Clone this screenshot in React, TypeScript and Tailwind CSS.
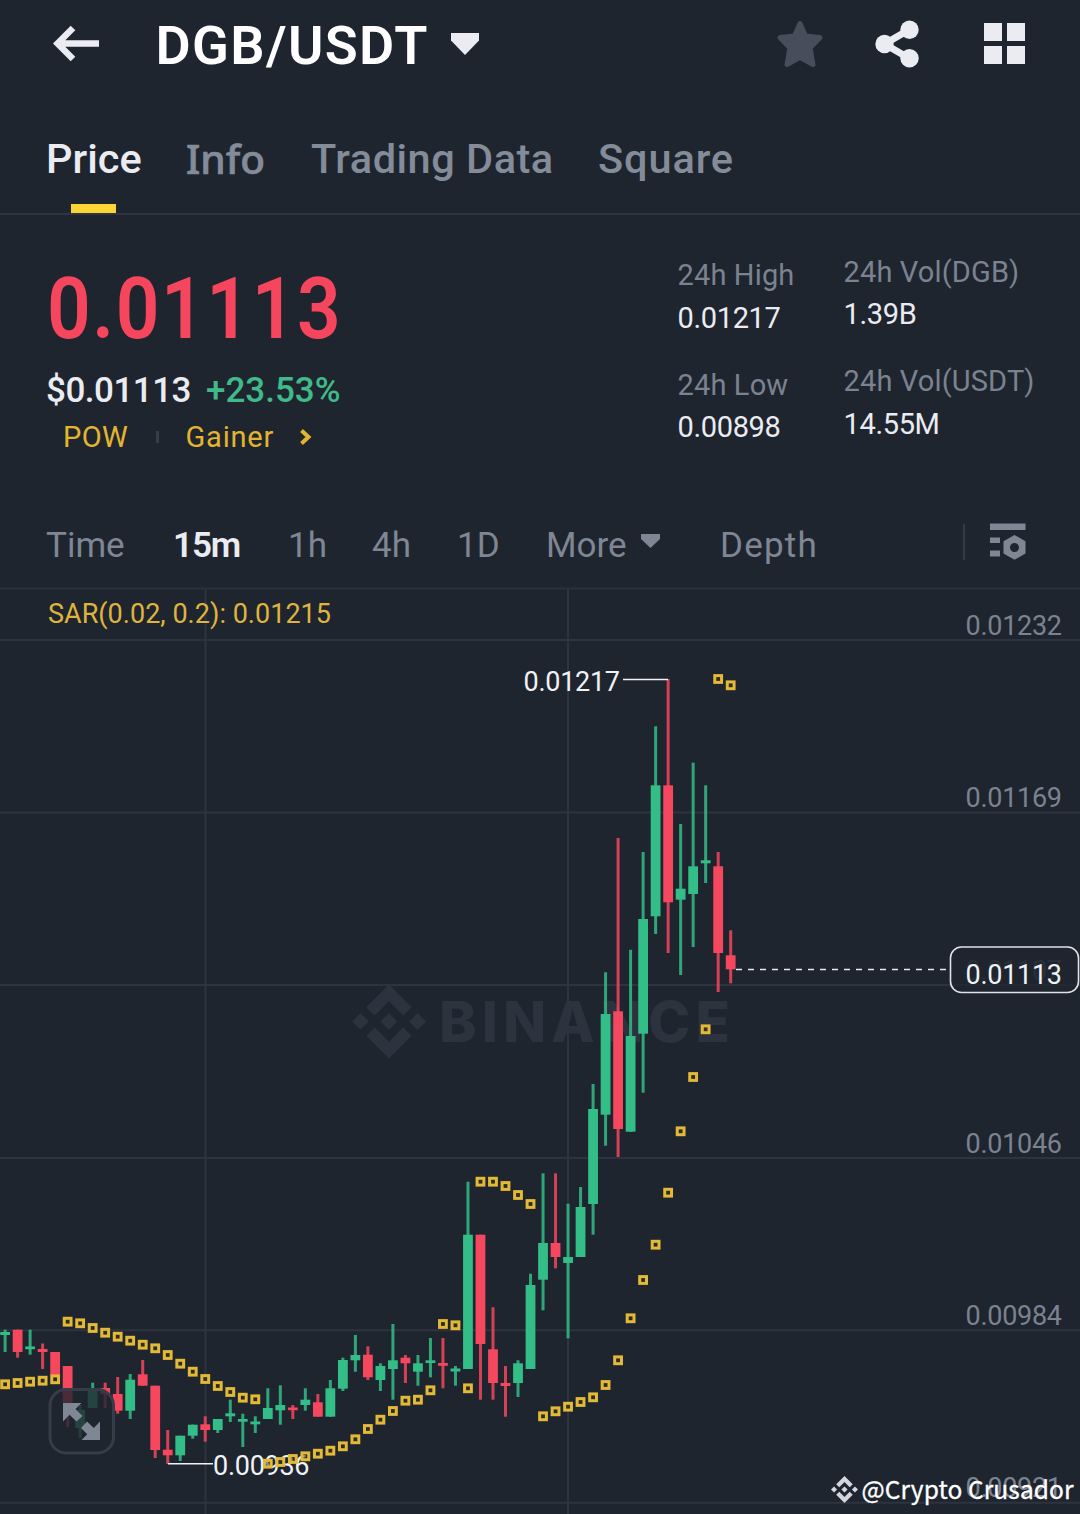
import { SiBinance } from 'react-icons/si';

type Candle = [color: 'g' | 'r', high: number, low: number, top: number, bottom: number];

const UP = '#33bd87';
const DOWN = '#f5475e';
const SAR = '#e3b938';

const candles: Candle[] = [
  ['g', 1329.7, 1352, 1332, 1335],
  ['r', 1329.7, 1357.7, 1329.7, 1352],
  ['g', 1329.7, 1354.7, 1346.5, 1349.2],
  ['r', 1343.5, 1369, 1349, 1352],
  ['r', 1352, 1375, 1352, 1375],
  ['r', 1366, 1427, 1366, 1402.7],
  ['g', 1405, 1438, 1410, 1428],
  ['g', 1382.7, 1408, 1389, 1408],
  ['r', 1382.7, 1408, 1388, 1394],
  ['r', 1377, 1413.7, 1394, 1410.7],
  ['g', 1374, 1419, 1379.7, 1410.7],
  ['r', 1360, 1385.7, 1374.3, 1385.7],
  ['r', 1385.7, 1458, 1385.7, 1450],
  ['r', 1430, 1464, 1449.7, 1455.3],
  ['g', 1435.7, 1461, 1435.7, 1455.3],
  ['g', 1424.7, 1438.7, 1424.7, 1435.7],
  ['r', 1416.3, 1441.7, 1424.3, 1430],
  ['g', 1419, 1433, 1419, 1430],
  ['g', 1399.7, 1422, 1413.3, 1416.3],
  ['g', 1413.7, 1447, 1419, 1421.7],
  ['g', 1416.3, 1433, 1421.5, 1424.3],
  ['g', 1388.3, 1419, 1408, 1419],
  ['g', 1385.3, 1424.7, 1405, 1410.3],
  ['r', 1405, 1419, 1407.5, 1410.2],
  ['g', 1388.3, 1410.7, 1399.7, 1405],
  ['r', 1394, 1416.7, 1402.3, 1416.7],
  ['g', 1380, 1416.7, 1388.3, 1416.7],
  ['g', 1357.7, 1391, 1360, 1388.7],
  ['g', 1335, 1371.7, 1355, 1360.3],
  ['r', 1346.3, 1380, 1354.7, 1377.3],
  ['g', 1363.3, 1391, 1366, 1380],
  ['g', 1324, 1399.7, 1360.3, 1369],
  ['r', 1355, 1383, 1357.7, 1363.3],
  ['g', 1355, 1385.7, 1363.3, 1371.7],
  ['g', 1338, 1377.3, 1360.3, 1363],
  ['r', 1338, 1388.3, 1363, 1365.8],
  ['g', 1366, 1385.7, 1368.5, 1371.5],
  ['g', 1181.7, 1369, 1234.7, 1369],
  ['r', 1234.7, 1399.7, 1234.7, 1344],
  ['r', 1307.3, 1399.7, 1349.3, 1383],
  ['r', 1366, 1416.7, 1383, 1386],
  ['g', 1360.3, 1397, 1363.3, 1383],
  ['g', 1273.7, 1369, 1285, 1369],
  ['g', 1173.3, 1310.3, 1243, 1279.7],
  ['r', 1173.3, 1268.3, 1243, 1257],
  ['g', 1203.7, 1338.3, 1257, 1263],
  ['g', 1187, 1257, 1207, 1257],
  ['g', 1084, 1234.7, 1109, 1204],
  ['g', 972.3, 1145.7, 1014, 1114.7],
  ['r', 838, 1157, 1011.3, 1129],
  ['g', 949.7, 1131.7, 1036, 1131.7],
  ['g', 852, 1092.7, 919, 1033.7],
  ['g', 726.3, 934, 785.3, 916.3],
  ['r', 679, 953, 785.3, 902.3],
  ['g', 824, 975, 888.7, 899.7],
  ['g', 762.7, 947, 866.3, 894],
  ['g', 785.3, 883, 860.3, 863.3],
  ['r', 852, 992, 866.3, 953],
  ['r', 930.3, 983.3, 955.3, 969.3],
];

const sar = [
  1384.3, 1383, 1381.7, 1380.7, 1379.3, 1321.7, 1323.3, 1328, 1332.7, 1336.7, 1340.7, 1344.7,
  1348.3, 1355, 1363.7, 1371.7, 1379, 1386, 1392, 1397.7, 1399.3, 1463.7, 1462, 1459, 1456.3,
  1453.7, 1450.7, 1446.3, 1439.3, 1429, 1419.7, 1411, 1400.7, 1399.7, 1390.3, 1324, 1325.3,
  1388.3, 1181.7, 1181.7, 1186, 1195, 1204, 1416.3, 1411.3, 1406.7, 1402, 1397.3, 1385, 1360.3,
  1318.3, 1280, 1244.7, 1192.7, 1131.3, 1077, 1029.3, 679, 685.3,
];

const axis = [
  { y: 640, label: '0.01232' },
  { y: 812.5, label: '0.01169' },
  { y: 985, label: '0.01107' },
  { y: 1158, label: '0.01046' },
  { y: 1330.3, label: '0.00984' },
  { y: 1502.7, label: '0.00921' },
];

const tabs = [
  { label: 'Price', className: 'w-[140px] text-[#eaecf2]' },
  { label: 'Info', className: "w-[125px] font-['Noto_Sans'] text-[40.5px] [-webkit-text-stroke:0.7px]" },
  { label: 'Trading Data', className: 'w-[287px] tracking-[0.5px]' },
  { label: 'Square', className: 'w-[160px] tracking-[0.9px]' },
];

const intervals = [
  { label: 'Time', className: 'w-[127px]' },
  { label: '15m', className: 'w-[115px] font-semibold text-[#eaecf2] tracking-[-1.1px]' },
  { label: '1h', className: 'w-[84px]' },
  { label: '4h', className: 'w-[85px]' },
  { label: '1D', className: 'w-[89px]' },
];

const stats = [
  {
    className: 'w-[166px] pt-[3.5px]',
    items: [
      { label: '24h High', value: '0.01217' },
      { label: '24h Low', value: '0.00898' },
    ],
  },
  {
    className: 'w-[200px]',
    items: [
      { label: '24h Vol(DGB)', value: '1.39B' },
      { label: '24h Vol(USDT)', value: '14.55M' },
    ],
  },
];

const candleX = (i: number) => 5.1 + i * 12.51;

function Header() {
  return (
    <header className="flex h-[88px] items-center pl-[52.5px] text-[#eaecf2]">
      <svg className="h-[38px] w-[47px]" viewBox="0 0 47 38" fill="none" stroke="currentColor" strokeWidth="6.5">
        <path d="M20 3 4.5 18.500 20 34M5 18.500h41" />
      </svg>
      <h1 className="ml-[56px] w-[295px] pt-[3px] text-[54px] leading-[60px] font-semibold tracking-[1.4px] text-white">
        DGB/USDT
      </h1>
      <svg className="h-[22px] w-[28px]" viewBox="0 0 28 22" fill="currentColor">
        <path d="M0 0h28v7.5L14 22 0 7.5z" />
      </svg>
      <svg className="ml-[298.5px] h-[48px] w-[46px] text-[#474d5a]" viewBox="0 0 46 48" fill="currentColor">
        <path
          d="M23 3.5 28.6 16 43 17.6 33 28l3 16.5-13-7.2-13 7.2L13 28 3 17.6 17.4 16z"
          stroke="currentColor"
          strokeWidth="5"
          strokeLinejoin="round"
        />
      </svg>
      <svg className="ml-[52px] h-[48px] w-[44px]" viewBox="0 0 44 48" fill="currentColor">
        <path d="M34.5 9.5 9.5 24l25 14.5" fill="none" stroke="currentColor" strokeWidth="7" />
        <circle cx="34.5" cy="9.7" r="9.2" />
        <circle cx="9.5" cy="24" r="9.2" />
        <circle cx="34.5" cy="38.3" r="9.2" />
      </svg>
      <div className="ml-[64.5px] grid grid-cols-2 gap-x-[5px] gap-y-[5px] pb-[1px]">
        <i className="size-[18px] bg-current" />
        <i className="size-[18px] bg-current" />
        <i className="size-[18px] bg-current" />
        <i className="size-[18px] bg-current" />
      </div>
    </header>
  );
}

function Tabs() {
  return (
    <nav className="flex h-[127px] flex-col justify-between border-b-2 border-[#2e3540] pt-[46px]">
      <div className="flex h-[50px] pl-[46px] text-[41.5px] leading-[50px] font-medium whitespace-nowrap text-[#848b99]">
        {tabs.map((tab) => (
          <span key={tab.label} className={tab.className}>
            {tab.label}
          </span>
        ))}
      </div>
      <div className="ml-[71px] h-[9px] w-[45px] bg-[#fbd535]" />
    </nav>
  );
}

function Summary() {
  return (
    <section className="flex h-[286px] whitespace-nowrap">
      <div className="w-[677.5px] pt-[49px] pl-[46px]">
        <div className="ml-[1px] origin-left scale-x-90 text-[85px] leading-[90px] font-semibold tracking-[1.8px] text-[#f6465d]">
          0.01113
        </div>
        <div className="mt-[17px] flex text-[35px] leading-[40px] font-medium">
          <span className="w-[160px] tracking-[-0.5px] text-[#eaecf2]">$0.01113</span>
          <span className="text-[#3fba88]">+23.53%</span>
        </div>
        <div className="mt-[8px] flex items-center pl-[17px] text-[29px] leading-[36px] text-[#e3b52f]">
          <span className="w-[92.5px] tracking-[0.4px]">POW</span>
          <span className="h-[12px] w-[3px] bg-[#373d49]" />
          <span className="ml-[27px] w-[114.5px] tracking-[0.8px]">Gainer</span>
          <svg className="h-[16px] w-[12px]" viewBox="0 0 12 16" fill="none" stroke="currentColor" strokeWidth="4">
            <path d="m1.5 1.5 7 6.5-7 6.5" />
          </svg>
        </div>
      </div>
      {stats.map((column) => (
        <div key={column.items[0].label} className={column.className}>
          {column.items.map((item) => (
            <div key={item.label} className="mb-[1px] h-[108.5px] pt-[38.5px] text-[29px]">
              <div className="leading-[36px] tracking-[0.15px] text-[#7b8290]">{item.label}</div>
              <div className="mt-[6.500px] leading-[36px] tracking-[-0.35px] text-[#eaecf2]">{item.value}</div>
            </div>
          ))}
        </div>
      ))}
    </section>
  );
}

function Intervals() {
  return (
    <div className="flex h-[86px] items-center pl-[46px] text-[35px] leading-[44px] whitespace-nowrap text-[#7f8694]">
      <div className="flex pt-[3px]">
        {intervals.map((item) => (
          <span key={item.label} className={item.className}>
            {item.label}
          </span>
        ))}
        <span className="w-[95px]">More</span>
      </div>
      <svg className="mb-[7px] h-[14px] w-[19px]" viewBox="0 0 19 14" fill="currentColor">
        <path d="M0 0h19v5L9.500 14 0 5z" />
      </svg>
      <span className="ml-[60px] w-[243px] pt-[3px] tracking-[1.2px]">Depth</span>
      <span className="mb-[4px] h-[36px] w-[2px] bg-[#343b47]" />
      <svg className="mb-[5px] ml-[25px] h-[37px] w-[36px]" viewBox="0 0 36 37" fill="currentColor">
        <path d="M0 .5h35.500v6.500H0zM0 14.500h10V20H0zM0 27.500h10v6H0z" />
        <path
          fillRule="evenodd"
          d="M24.500 12 35.500 18.200v12.300L24.500 36.800 13.500 30.500V18.200zM24.500 20a4.500 4.500 0 1 0 0 9 4.500 4.500 0 0 0 0-9z"
        />
      </svg>
    </div>
  );
}

function Chart() {
  return (
    <svg className="block h-[927px] w-[1080px]" viewBox="0 587 1080 927">
      <rect x="0" y="587.500" width="1080" height="2" fill="#2b313d" />
      <g stroke="#2d343f" strokeWidth="2">
        {axis.map((line) => (
          <path key={line.label} d={`M0 ${line.y}H1080`} />
        ))}
        <path d="M205.500 589V1514M568 589V1514" />
      </g>

      <g className="text-[#2d333e]" fill="currentColor">
        <SiBinance x="352" y="984.500" size={74} />
        <text x="439" y="1042" textLength="291" className="font-['Inter'] text-[56.5px] font-extrabold">
          BINANCE
        </text>
      </g>

      <g className="text-[27px]" fill="#7b8290">
        {axis.map((line) => (
          <text key={line.label} x="965.500" y={line.y - 5.5} textLength="96.500" fillOpacity={line.y === 985 ? 0.4 : 1}>
            {line.label}
          </text>
        ))}
      </g>
      <text x="48" y="623" textLength="283" fill="#dfb43c" className="text-[27px]">
        SAR(0.02, 0.2): 0.01215
      </text>

      {candles.map(([color, high, low, top, bottom], i) => {
        const x = candleX(i);
        return (
          <g key={i} fill={color === 'g' ? UP : DOWN}>
            <rect x={x - 1.5} y={high} width="3" height={low - high} opacity="0.85" />
            <rect x={x - 4.9} y={top} width="9.800" height={bottom - top} />
          </g>
        );
      })}

      <g fill="#f0f2f6" className="text-[27px]">
        <path d="M623 679.500H668M168 1463.700H213" stroke="#f0f2f6" strokeWidth="1.600" />
        <text x="523.500" y="690.500" textLength="96.500">
          0.01217
        </text>
        <text x="213" y="1474.500" textLength="96.500">
          0.00936
        </text>
      </g>

      {sar.map((y, i) => (
        <rect
          key={i}
          x={candleX(i) - 3.4}
          y={y - 3.4}
          width="6.800"
          height="6.800"
          fill="#3a3320"
          fillOpacity="0.5"
          stroke={SAR}
          strokeWidth="3"
        />
      ))}

      <path d="M736 969.500H949" stroke="#e6e8ed" strokeWidth="1.600" strokeDasharray="6 6" />
      <rect x="950.500" y="947" width="128" height="45.500" rx="11" fill="#1f252f" fillOpacity="0.700" stroke="#dfe2e8" strokeWidth="1.600" />
      <text x="965.500" y="983.500" textLength="96.500" fill="#f0f2f6" className="text-[27px]">
        0.01113
      </text>

      <rect x="50" y="1389.500" width="63.500" height="63.500" rx="16" fill="#1f252f" fillOpacity="0.800" stroke="#363d49" strokeWidth="3" />
      <g fill="#7f8694">
        <path d="M63 1403H81.500L75.500 1409 82.500 1416 76.500 1421.500 69.500 1414.700 63 1421.500z" />
        <path d="M100 1440H81.500L87.200 1434.300 81 1428 87 1421.500 93.800 1428 100 1421.500z" />
      </g>
    </svg>
  );
}

export default function App() {
  return (
    <main className="relative h-[1514px] w-[1080px] overflow-hidden bg-[#1f252f] font-['Roboto','Liberation_Sans',sans-serif]">
      <Header />
      <Tabs />
      <Summary />
      <Intervals />
      <Chart />
      <div className="absolute bottom-[7px] left-[830.5px] flex items-center gap-[4px] font-['Noto_Sans_CJK_SC',sans-serif] text-[24.5px] leading-[36px] tracking-[0.1px] whitespace-nowrap text-white [-webkit-text-stroke:0.3px]">
        <SiBinance size={27} className="text-[#d3d6dc]" />
        <span>@Crypto Crusador</span>
      </div>
    </main>
  );
}
